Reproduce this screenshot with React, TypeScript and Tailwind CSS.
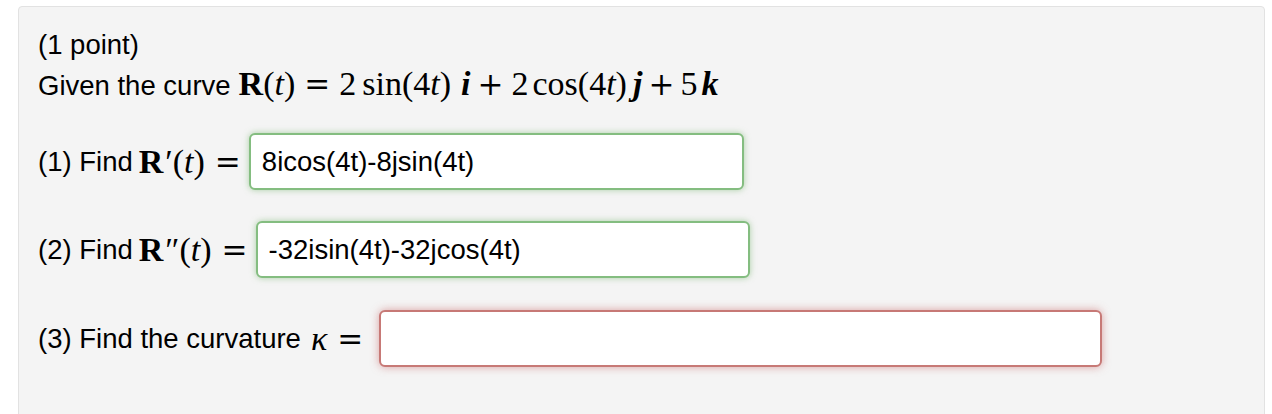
import React from "react";

const sans = { fontFamily: '"Liberation Sans", Arial, Helvetica, sans-serif' };

// symbols in math mode: serif, a bit bigger than the surrounding text
function M({ children, className = "" }: { children: React.ReactNode; className?: string }) {
  return (
    <span className={`font-['Liberation_Serif',serif] text-[34px] whitespace-nowrap ${className}`}>{children}</span>
  );
}

// = and + are wider in the math font
function Op({ c, className = "" }: { c: string; className?: string }) {
  return <span className={`font-['DejaVu_Serif',serif] text-[31px] ${className}`}>{c}</span>;
}

function Vec({ c, className = "" }: { c: string; className?: string }) {
  return <span className={`font-bold italic ${className}`}>{c}</span>;
}

function AnswerBox({ value, state, width }: { value: string; state: "ok" | "bad"; width: string }) {
  const look =
    state === "ok"
      ? "border-[#84bd80] shadow-[0_0_6px_rgba(110,175,100,0.55)]"
      : "border-[#c77976] shadow-[0_0_8px_rgba(200,105,105,0.6)]";
  return (
    <input
      readOnly
      value={value}
      className={`h-[57px] ${width} rounded-[6px] border-2 bg-white px-[11px] text-[27.5px] text-black outline-none ${look}`}
      style={sans}
    />
  );
}

export default function App() {
  return (
    <div className="min-h-screen bg-white pt-[6px] pl-[18px] pr-[7px]" style={sans}>
      <div className="h-[420px] rounded border border-[#e2e2e2] bg-[#f4f4f4] px-[19px] pt-[20px] text-[27.5px] text-black">
        <div className="leading-[36px]">(1 point)</div>
        <div className="leading-[40px] mt-[1px] flex items-baseline">
          <span>Given the curve</span>
          <M className="ml-[8px]">
            <span className="font-bold">R</span>(<i>t</i>)
            <Op c="=" className="ml-[9px]" />
            <span className="ml-[9px]">2</span>
            <span className="ml-[6px]">sin</span>(4<i>t</i>)
            <Vec c="i" className="ml-[10px]" />
            <Op c="+" className="ml-[7px]" />
            <span className="ml-[8px]">2</span>
            <span className="ml-[4px]">cos</span>(4<i>t</i>)
            <Vec c="j" className="ml-[6px]" />
            <Op c="+" className="ml-[6px]" />
            <span className="ml-[6px]">5</span>
            <Vec c="k" className="ml-[4px]" />
          </M>
        </div>

        <div className="mt-[27px] flex items-center">
          <span>(1) Find</span>
          <M className="ml-[6px]">
            <span className="font-bold">R</span>
            <span className="ml-[2px]">′</span>(<i>t</i>)
            <Op c="=" className="ml-[10px]" />
          </M>
          <span className="ml-[8px]">
            <AnswerBox value="8icos(4t)-8jsin(4t)" state="ok" width="w-[495px]" />
          </span>
        </div>

        <div className="mt-[31px] flex items-center">
          <span>(2) Find</span>
          <M className="ml-[6px]">
            <span className="font-bold">R</span>
            <span className="ml-[2px]">″</span>(<i>t</i>)
            <Op c="=" className="ml-[10px]" />
          </M>
          <span className="ml-[8px]">
            <AnswerBox value="-32isin(4t)-32jcos(4t)" state="ok" width="w-[494px]" />
          </span>
        </div>

        <div className="mt-[32px] flex items-center">
          <span>(3) Find the curvature</span>
          <M className="ml-[10px]">
            <i>κ</i>
            <Op c="=" className="ml-[10px]" />
          </M>
          <span className="ml-[16px]">
            <AnswerBox value="" state="bad" width="w-[723px]" />
          </span>
        </div>
      </div>
    </div>
  );
}
